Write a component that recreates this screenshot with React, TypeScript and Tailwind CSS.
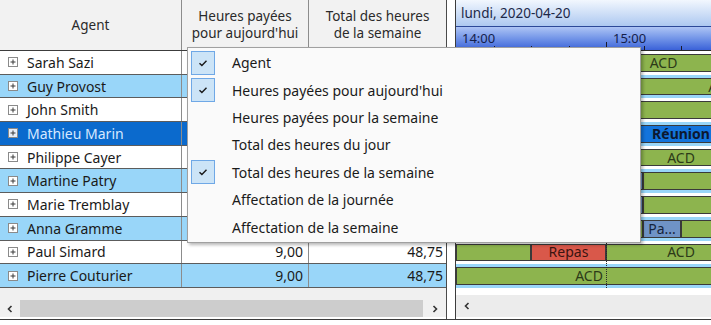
import React from "react";

type Tone = "white" | "blue" | "selected";

interface Agent {
  name: string;
  paid: string;
  week: string;
  tone: Tone;
}

interface Bar {
  start: number;
  width: number;
  kind: "acd" | "meeting" | "lunch" | "pause";
  label?: string;
}

const agents: Agent[] = [
  { name: "Sarah Sazi", paid: "9,00", week: "48,75", tone: "white" },
  { name: "Guy Provost", paid: "9,00", week: "48,75", tone: "blue" },
  { name: "John Smith", paid: "9,00", week: "48,75", tone: "white" },
  { name: "Mathieu Marin", paid: "9,00", week: "48,75", tone: "selected" },
  { name: "Philippe Cayer", paid: "9,00", week: "48,75", tone: "white" },
  { name: "Martine Patry", paid: "9,00", week: "48,75", tone: "blue" },
  { name: "Marie Tremblay", paid: "9,00", week: "48,75", tone: "white" },
  { name: "Anna Gramme", paid: "9,00", week: "48,75", tone: "blue" },
  { name: "Paul Simard", paid: "9,00", week: "48,75", tone: "white" },
  { name: "Pierre Couturier", paid: "9,00", week: "48,75", tone: "blue" },
];

// 14:00 = 0px, 150px per hour
const schedule: Bar[][] = [
  [{ start: 0, width: 150, kind: "acd" }, { start: 150, width: 115, kind: "acd", label: "ACD" }],
  [{ start: 0, width: 150, kind: "acd" }, { start: 150, width: 232, kind: "acd", label: "ACD" }],
  [{ start: 0, width: 150, kind: "acd" }, { start: 150, width: 300, kind: "acd", label: "ACD" }],
  [{ start: 0, width: 150, kind: "acd" }, { start: 150, width: 150, kind: "meeting", label: "Réunion" }],
  [{ start: 0, width: 150, kind: "acd" }, { start: 150, width: 150, kind: "acd", label: "ACD" }],
  [{ start: 0, width: 150, kind: "acd" }, { start: 150, width: 37, kind: "pause" }, { start: 187, width: 200, kind: "acd" }],
  [{ start: 0, width: 150, kind: "acd" }, { start: 150, width: 37, kind: "pause" }, { start: 187, width: 200, kind: "acd" }],
  [{ start: 0, width: 187, kind: "acd" }, { start: 187, width: 38, kind: "pause", label: "Pa..." }, { start: 225, width: 150, kind: "acd" }],
  [{ start: 0, width: 75, kind: "acd" }, { start: 75, width: 75, kind: "lunch", label: "Repas" }, { start: 150, width: 150, kind: "acd", label: "ACD" }],
  [{ start: 0, width: 266, kind: "acd", label: "ACD" }],
];

const menuItems = [
  { label: "Agent", checked: true },
  { label: "Heures payées pour aujourd'hui", checked: true },
  { label: "Heures payées pour la semaine", checked: false },
  { label: "Total des heures du jour", checked: false },
  { label: "Total des heures de la semaine", checked: true },
  { label: "Affectation de la journée", checked: false },
  { label: "Affectation de la semaine", checked: false },
];

const rowBg: Record<Tone, string> = {
  white: "bg-white text-[#1a1a1a]",
  blue: "bg-[#99d6f9] text-[#1a1a1a]",
  selected: "bg-[#0b6acd] text-[#d6e8ff]",
};

const barBg: Record<Bar["kind"], string> = {
  acd: "bg-[#8db44e] text-[#2c3a18]",
  meeting: "bg-[#1374dc] text-[#0c1830] font-bold",
  lunch: "bg-[#d9584a] text-[#3a1410]",
  pause: "bg-[#6f93c6] text-[#16243c]",
};

const PlusBox = ({ dark }: { dark?: boolean }) => (
  <svg width="10" height="10" viewBox="0 0 10 10" className="shrink-0">
    <rect x="0.5" y="0.5" width="9" height="9" fill={dark ? "#e8eef8" : "#fff"} stroke="#8a8a8a" />
    <path d="M2.5 5h5M5 2.5v5" stroke="#3a3a3a" strokeWidth="1" />
  </svg>
);

const Chevron = ({ right }: { right?: boolean }) => (
  <svg width="8" height="10" viewBox="0 0 8 10">
    <path d={right ? "M2.5 2l3 3-3 3" : "M5.5 2l-3 3 3 3"} fill="none" stroke="#333" strokeWidth="1.6" />
  </svg>
);

const LeftGrid = () => (
  <div className="flex w-[447px] flex-col border-r border-[#4a4a4a]">
    <div className="flex h-[51px] border-b border-[#3c3c3c] bg-[#f2f2f2] text-[13.5px] leading-[17px] text-[#2a2a2a]">
      <div className="flex w-[182px] items-center justify-center border-r border-[#8c8c8c]">Agent</div>
      <div className="flex w-[127px] items-center justify-center border-r border-[#8c8c8c] text-center">
        Heures payées
        <br />
        pour aujourd'hui
      </div>
      <div className="flex flex-1 items-center justify-center text-center">
        Total des heures
        <br />
        de la semaine
      </div>
    </div>

    {agents.map((agent) => (
      <div
        key={agent.name}
        className={`flex h-[23.7px] border-b border-[#5c5c5c] text-[14px] ${rowBg[agent.tone]}`}
      >
        <div className="flex w-[182px] items-center gap-[9px] border-r border-[#8c8c8c] pl-[8px]">
          <PlusBox dark={agent.tone === "selected"} />
          <span>{agent.name}</span>
        </div>
        <div className="flex w-[127px] items-center justify-end border-r border-[#8c8c8c] pr-[5px]">
          {agent.paid}
        </div>
        <div className="flex flex-1 items-center justify-end pr-[3px]">{agent.week}</div>
      </div>
    ))}

    <div className="flex-1 bg-[#f0f0f0]" />
    <div className="mb-[2px] flex h-[17px] items-center bg-[#f0f0f0]">
      <div className="flex w-[20px] justify-center">
        <Chevron />
      </div>
      <div className="h-full flex-1 bg-[#cdcdcd]" />
      <div className="flex w-[23px] justify-center">
        <Chevron right />
      </div>
    </div>
  </div>
);

const Timeline = () => (
  <div className="flex flex-1 flex-col overflow-hidden border-l border-[#3c3c3c]">
    <div className="flex h-[27px] items-center border-b border-[#2c4898] bg-gradient-to-b from-[#f2f7fe] to-[#adc8f0] pl-[5px] text-[13.5px] text-[#1c2848]">
      lundi, 2020-04-20
    </div>
    <div className="relative h-[24px] border-b border-[#2a2a2a] bg-gradient-to-b from-[#aec4f4] to-[#3b61d8] text-[13px] text-[#14204a]">
      <span className="absolute left-[6px] top-[2px]">14:00</span>
      <span className="absolute left-[157px] top-[2px]">15:00</span>
      {[37.5, 75, 112.5, 187.5, 225].map((x) => (
        <div key={x} className="absolute bottom-0 h-[4px] w-px bg-[#1a1a2a]" style={{ left: x }} />
      ))}
      <div className="absolute bottom-0 left-[150px] h-[8px] w-px bg-[#1a1a2a]" />
    </div>

    <div className="relative">
      {agents.map((agent, i) => (
        <div
          key={agent.name}
          className={`relative h-[23.7px] ${agent.tone === "white" ? "bg-white" : "bg-[#99d6f9]"}`}
        >
          {schedule[i].map((bar) => (
            <div
              key={bar.start}
              className={`absolute bottom-[3px] top-[3px] flex items-center justify-center overflow-hidden border border-[#3a3a3a] text-[14px] leading-none ${barBg[bar.kind]}`}
              style={{ left: bar.start, width: bar.width }}
            >
              {bar.label}
            </div>
          ))}
        </div>
      ))}
      <div className="absolute bottom-0 left-[150px] top-0 border-l border-dotted border-[#2a2a2a]" />
    </div>

    <div className="flex-1 bg-white" />
    <div className="mb-[2px] flex h-[22px] items-center bg-[#ececec] pl-[7px]">
      <Chevron />
    </div>
  </div>
);

const Check = () => (
  <svg width="12" height="12" viewBox="0 0 12 12">
    <path d="M2.5 6.2l2.4 2.4 4.6-4.8" fill="none" stroke="#1a1a1a" strokeWidth="1.4" />
  </svg>
);

const ColumnMenu = () => (
  <div className="absolute left-[187px] top-[47px] flex h-[196px] w-[454px] flex-col border border-[#a0a0a0] bg-[#fafafa] py-[1px] shadow-[2px_2px_3px_rgba(0,0,0,0.28)]">
    {menuItems.map((item) => (
      <div key={item.label} className="flex h-[27.5px] items-center text-[14px] text-[#1a1a1a]">
        <div className="flex w-[44px] items-center pl-[3px]">
          {item.checked && (
            <div className="flex h-[24px] w-[24px] items-center justify-center border border-[#6fa8e6] bg-[#cce4f7]">
              <Check />
            </div>
          )}
        </div>
        <span>{item.label}</span>
      </div>
    ))}
  </div>
);

export default function App() {
  return (
    <div className="relative h-[325px] w-[711px] overflow-hidden bg-white font-['Noto_Sans',sans-serif]">
      <div className="flex h-[320px] border-b border-[#3c3c3c]">
        <LeftGrid />
        <div className="w-[8px] bg-white" />
        <Timeline />
      </div>
      <ColumnMenu />
    </div>
  );
}
